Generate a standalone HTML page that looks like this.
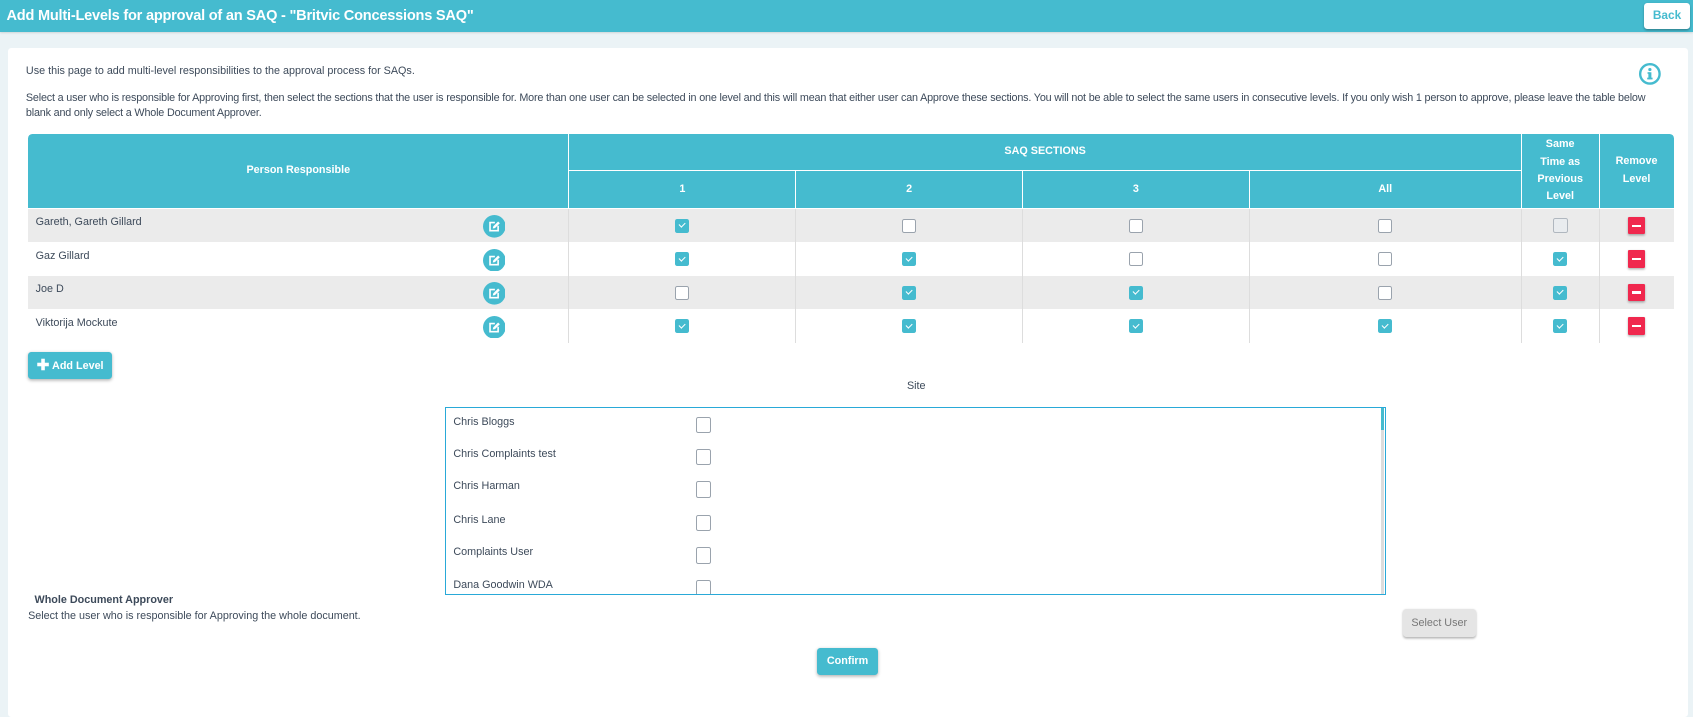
<!DOCTYPE html>
<html><head><meta charset="utf-8"><style>
html,body{margin:0;padding:0;}
body{width:1568px;height:641px;zoom:1.0797;background:#ebf3f6;font-family:"Liberation Sans",Arial,sans-serif;color:#3d4a5a;position:relative;overflow:hidden;font-size:10px}
.a{position:absolute}
.hdr{left:0;top:0;width:1568px;height:30px;background:#45bbcf;box-shadow:0 1px 2px rgba(0,0,0,.15)}
.title{left:6px;top:7px;color:#fff;font-weight:bold;font-size:13.5px;letter-spacing:-0.2px}
.back{left:1523px;top:3px;width:42px;height:24px;background:#fff;border-radius:3px;color:#45bbcf;font-weight:bold;font-size:11px;text-align:center;line-height:24px;box-shadow:0 1px 2px rgba(0,0,0,.3)}
.card{left:7px;top:44px;width:1556px;height:620px;background:#fff;border-radius:3px}
table{border-collapse:collapse;position:absolute;left:26px;top:124px;width:1524px;table-layout:fixed}
th{background:#45bbcf;color:#fff;font-size:10px;font-weight:bold;text-align:center;border:1px solid #fff;border-top:0;padding:0;line-height:16px}
th.f{border-left:0}th.l{border-right:0}
td{height:31px;border-left:1px solid #ddd;padding:0;text-align:center;vertical-align:middle;position:relative}
td:first-child{border-left:0;text-align:left;vertical-align:top}
tr.g td{background:#ebebeb}
.nm{position:absolute;left:7px;top:7px;font-size:10px}
.ed{position:absolute;left:421px;top:6px;width:21px;height:21px}
.cb{display:inline-block;width:13px;height:13px;border:1px solid #9aa3ad;border-radius:2px;background:#fff;box-sizing:border-box;vertical-align:middle}
.ck{display:inline-block;width:13px;height:13px;border-radius:2px;background:#45bbcf;vertical-align:middle;position:relative}
.ck:after{content:"";position:absolute;left:4.5px;top:2.5px;width:2.5px;height:5px;border:solid #fff;border-width:0 1.8px 1.8px 0;transform:rotate(45deg)}
.cbg{display:inline-block;width:14px;height:14px;border:1px solid #b0b7bf;border-radius:2px;background:#e9ecef;box-sizing:border-box;vertical-align:middle}
.rm{display:inline-block;width:16px;height:16px;background:#f0284e;border-radius:1px;position:relative;vertical-align:middle;box-shadow:0 1px 2px rgba(0,0,0,.3)}
.rm:after{content:"";position:absolute;left:4px;top:7px;width:8px;height:2px;background:#fff}
.btn{background:#45bbcf;color:#fff;font-weight:bold;border-radius:3px;text-align:center;box-shadow:0 1px 3px rgba(0,0,0,.3)}
.list{left:412px;top:377px;width:870px;height:172px;border:1px solid #29a9d8;overflow:hidden;background:#fff}
.it{position:absolute;left:7px;font-size:10px}
.lc{position:absolute;left:232px;width:14px;height:15px;border:1px solid #9aa3ad;border-radius:2px;box-sizing:border-box}
</style></head><body>
<div class="a hdr"></div>
<div class="a title">Add Multi-Levels for approval of an SAQ - "Britvic Concessions SAQ"</div>
<div class="a back">Back</div>
<div class="a card"></div>
<div class="a" style="left:24px;top:60px">Use this page to add multi-level responsibilities to the approval process for SAQs.</div>
<div class="a" style="left:24px;top:84px;width:1540px;line-height:14px;white-space:nowrap;letter-spacing:-0.16px">Select a user who is responsible for Approving first, then select the sections that the user is responsible for. More than one user can be selected in one level and this will mean that either user can Approve these sections. You will not be able to select the same users in consecutive levels. If you only wish 1 person to approve, please leave the table below<br>blank and only select a Whole Document Approver.</div>
<svg class="a" style="left:1517px;top:57px" width="22" height="22" viewBox="0 0 22 22"><circle cx="11" cy="11" r="9" fill="none" stroke="#45bbcf" stroke-width="2.2"/><circle cx="11" cy="7" r="1.5" fill="#45bbcf"/><rect x="9.6" y="9.5" width="2.8" height="6.5" fill="#45bbcf"/><rect x="8.5" y="14.5" width="5" height="1.6" fill="#45bbcf"/><rect x="8.8" y="9.5" width="2" height="1.4" fill="#45bbcf"/></svg>

<table>
<colgroup><col style="width:501px"><col style="width:210px"><col style="width:210px"><col style="width:210px"><col style="width:252px"><col style="width:72px"><col style="width:69px"></colgroup>
<tr style="height:34px"><th class="f" rowspan="2" style="border-radius:4px 0 0 0">Person Responsible</th><th colspan="4">SAQ SECTIONS</th><th rowspan="2">Same<br>Time as<br>Previous<br>Level</th><th class="l" rowspan="2" style="border-radius:0 4px 0 0;vertical-align:top;padding-top:18px">Remove<br>Level</th></tr>
<tr style="height:35px"><th>1</th><th>2</th><th>3</th><th>All</th></tr>
<tr class="g"><td><span class="nm">Gareth, Gareth Gillard</span><svg class="ed" viewBox="0 0 21 21"><circle cx="10.5" cy="10.5" r="10.5" fill="#45bbcf"/><path d="M11 7H6.5v7.5H14V10" fill="none" stroke="#fff" stroke-width="1.5"/><path d="M9 12.5l.5-2 4.5-4.5 1.6 1.6-4.5 4.5z" fill="#fff"/></svg></td><td><span class="ck"></span></td><td><span class="cb"></span></td><td><span class="cb"></span></td><td><span class="cb"></span></td><td><span class="cbg"></span></td><td><span class="rm"></span></td></tr>
<tr><td><span class="nm">Gaz Gillard</span><svg class="ed" viewBox="0 0 21 21"><circle cx="10.5" cy="10.5" r="10.5" fill="#45bbcf"/><path d="M11 7H6.5v7.5H14V10" fill="none" stroke="#fff" stroke-width="1.5"/><path d="M9 12.5l.5-2 4.5-4.5 1.6 1.6-4.5 4.5z" fill="#fff"/></svg></td><td><span class="ck"></span></td><td><span class="ck"></span></td><td><span class="cb"></span></td><td><span class="cb"></span></td><td><span class="ck"></span></td><td><span class="rm"></span></td></tr>
<tr class="g"><td><span class="nm">Joe D</span><svg class="ed" viewBox="0 0 21 21"><circle cx="10.5" cy="10.5" r="10.5" fill="#45bbcf"/><path d="M11 7H6.5v7.5H14V10" fill="none" stroke="#fff" stroke-width="1.5"/><path d="M9 12.5l.5-2 4.5-4.5 1.6 1.6-4.5 4.5z" fill="#fff"/></svg></td><td><span class="cb"></span></td><td><span class="ck"></span></td><td><span class="ck"></span></td><td><span class="cb"></span></td><td><span class="ck"></span></td><td><span class="rm"></span></td></tr>
<tr><td><span class="nm">Viktorija Mockute</span><svg class="ed" viewBox="0 0 21 21"><circle cx="10.5" cy="10.5" r="10.5" fill="#45bbcf"/><path d="M11 7H6.5v7.5H14V10" fill="none" stroke="#fff" stroke-width="1.5"/><path d="M9 12.5l.5-2 4.5-4.5 1.6 1.6-4.5 4.5z" fill="#fff"/></svg></td><td><span class="ck"></span></td><td><span class="ck"></span></td><td><span class="ck"></span></td><td><span class="ck"></span></td><td><span class="ck"></span></td><td><span class="rm"></span></td></tr>
</table>

<div class="a btn" style="left:26px;top:326px;width:78px;height:25px;line-height:25px;font-size:10px"><span style="font-size:14px;vertical-align:-1px">&#10010;</span> Add Level</div>
<div class="a" style="left:840px;top:352px">Site</div>
<div class="a list">
<div class="it" style="top:7px">Chris Bloggs</div><div class="lc" style="top:8px"></div>
<div class="it" style="top:37px">Chris Complaints test</div><div class="lc" style="top:38px"></div>
<div class="it" style="top:67px">Chris Harman</div><div class="lc" style="top:68px"></div>
<div class="it" style="top:98px">Chris Lane</div><div class="lc" style="top:99px"></div>
<div class="it" style="top:128px">Complaints User</div><div class="lc" style="top:129px"></div>
<div class="it" style="top:158px">Dana Goodwin WDA</div><div class="lc" style="top:159px"></div>
<div style="position:absolute;left:866px;top:0;width:3px;height:172px;background:#ddd"></div>
<div style="position:absolute;left:866px;top:0;width:3px;height:20px;background:#45bbcf"></div>
</div>
<div class="a" style="left:32px;top:550px;font-weight:bold">Whole Document Approver</div>
<div class="a" style="left:26px;top:565px">Select the user who is responsible for Approving the whole document.</div>
<div class="a" style="left:1299px;top:564px;width:68px;height:26px;line-height:26px;background:#e5e5e5;border-radius:3px;text-align:center;color:#777;box-shadow:0 1px 2px rgba(0,0,0,.3)">Select User</div>
<div class="a btn" style="left:757px;top:600px;width:56px;height:25px;line-height:25px;font-size:10px">Confirm</div>
</body></html>
